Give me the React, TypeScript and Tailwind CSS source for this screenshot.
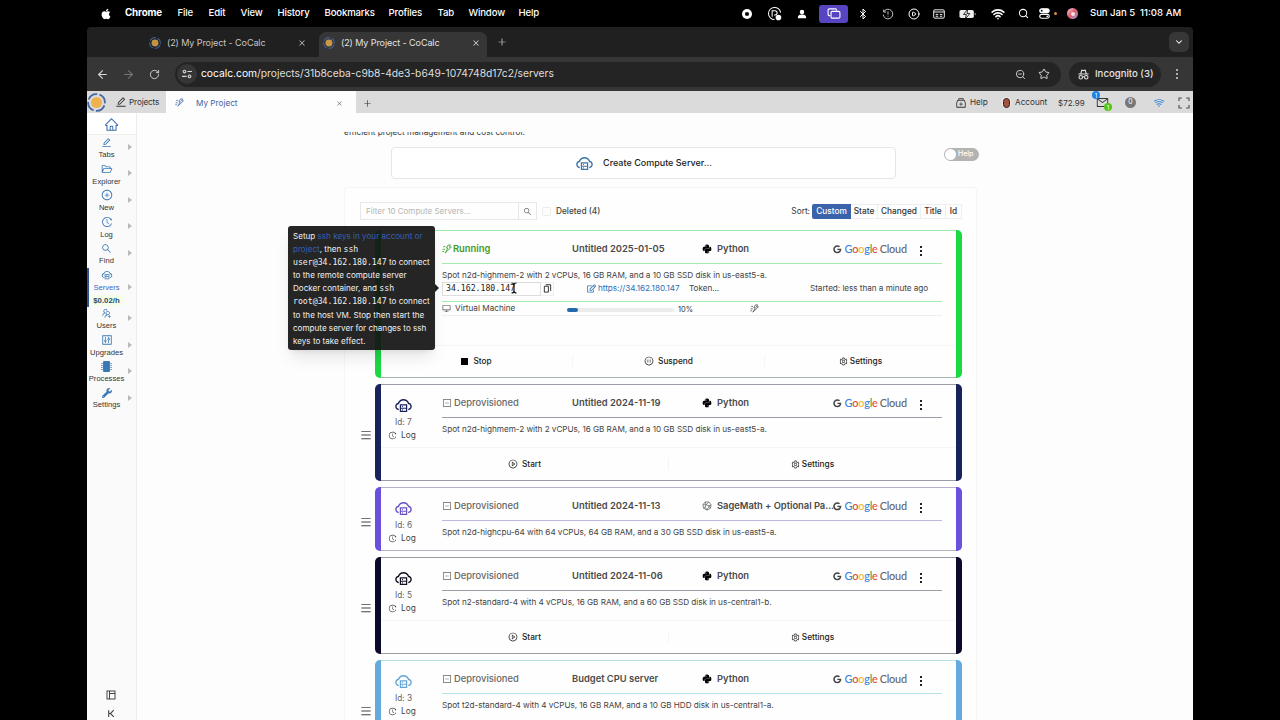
import type { ReactNode } from "react";
import {
  AiOutlineCloudServer,
  AiOutlineClose,
  AiOutlineControl,
  AiOutlineDesktop,
  AiOutlineEdit,
  AiOutlineFolderOpen,
  AiOutlineHistory,
  AiOutlineHome,
  AiOutlineMail,
  AiOutlineMedicineBox,
  AiOutlineMenu,
  AiOutlineMinusSquare,
  AiOutlinePauseCircle,
  AiOutlinePlayCircle,
  AiOutlinePlus,
  AiOutlinePlusCircle,
  AiOutlineSearch,
  AiOutlineSetting,
  AiOutlineUsergroupAdd,
  AiOutlineWifi,
} from "react-icons/ai";
import { FaApple, FaGoogle, FaMicrochip, FaPython, FaRegEdit, FaWrench } from "react-icons/fa";
import {
  ArrowLeft,
  ArrowRight,
  Bluetooth,
  ChevronDown,
  CirclePlay,
  RotateCw,
  Search,
  Star,
  Wifi,
  ZoomOut,
} from "lucide-react";
import { clsx } from "clsx";

function RunningIcon({ className }: { className?: string }) {
  return (
    <svg viewBox="0 0 16 16" className={className} fill="none" stroke="currentColor" strokeWidth="1.3">
      <path d="M10 1.5 7 6.500h2.600L5 14.500M15 5h-3.500L13.500 1.500H10M15 5 5 14.500" strokeLinejoin="round" />
      <path d="M2 4.200h3.500M1 8.500h4M.5 12h3" />
    </svg>
  );
}

function CocalcLogo({ className }: { className?: string }) {
  return (
    <svg viewBox="0 0 20 20" className={className} fill="none">
      <circle cx="10" cy="10" r="8.800" stroke="#4467a5" strokeWidth="1.900" strokeDasharray="11.300 2.500" transform="rotate(20 10 10)" />
      <circle cx="10" cy="10" r="5.800" fill="#efb14c" />
    </svg>
  );
}

/* ---------- macOS menu bar ---------- */

const MENU = [
  { label: "File", w: "w-[31px]" },
  { label: "Edit", w: "w-[32px]" },
  { label: "View", w: "w-[37px]" },
  { label: "History", w: "w-[47px]" },
  { label: "Bookmarks", w: "w-[64px]" },
  { label: "Profiles", w: "w-[49px]" },
  { label: "Tab", w: "w-[31px]" },
  { label: "Window", w: "w-[50px]" },
  { label: "Help", w: "w-[30px]" },
];

function MenuBar() {
  return (
    <div className="flex h-[27px] shrink-0 items-center bg-black pl-[100px] text-[9.6px] font-medium tracking-[-0.15px] text-white">
      <FaApple className="mr-[13px] size-[12px]" />
      <span className="w-[52.5px] text-[9.8px] font-bold">Chrome</span>
      {MENU.map((m) => (
        <span key={m.label} className={clsx(m.w, "whitespace-nowrap")}>
          {m.label}
        </span>
      ))}
      <div className="ml-auto flex items-center pr-[96px]">
        <svg viewBox="0 0 12 12" className="size-[10px]">
          <circle cx="6" cy="6" r="6" fill="white" />
          <rect x="3.8" y="3.8" width="4.4" height="4.4" rx="1" fill="black" />
        </svg>
        <svg viewBox="0 0 16 16" className="ml-[15px] size-[15px]" fill="none" stroke="white" strokeWidth="1.1">
          <path d="M14.500 7A6.500 6.500 0 1 0 8 14.500" />
          <path d="M5.500 11.500v-6.500h3a2.200 2.200 0 0 1 0 4.500H7.500" />
          <circle cx="12.200" cy="12.200" r="3" fill="white" stroke="none" />
        </svg>
        <svg viewBox="0 0 12 12" className="ml-[15.5px] size-[10px]" fill="white">
          <circle cx="6" cy="3.5" r="2.7" />
          <path d="M1 11c0-3.500 2-4.300 5-4.300s5 .8 5 4.300Z" />
        </svg>
        <span className="ml-[12px] flex h-[18px] w-[29px] items-center justify-center rounded-[3px] bg-[#5644c0]">
          <svg viewBox="0 0 16 13" className="h-[11px] w-[14px]" fill="none" stroke="white" strokeWidth="1.3">
            <path d="M3.500 9H2.500A1.500 1.500 0 0 1 1 7.500V2.500A1.500 1.500 0 0 1 2.500 1h7A1.500 1.500 0 0 1 11 2.500V3" />
            <rect x="4.5" y="4" width="10.5" height="8" rx="1.5" />
          </svg>
        </span>
        <Bluetooth className="ml-[9px] size-[12px]" strokeWidth={2} />
        <svg viewBox="0 0 14 14" className="ml-[13px] size-[12px]" fill="none" stroke="#ccc" strokeWidth="1.1">
          <path d="M2 4.500A5.600 5.600 0 1 1 1.400 7.600M2 1.800v2.900h2.900" />
          <path d="M7 4v3.600M7 9v1" />
        </svg>
        <CirclePlay className="ml-[14px] size-[12px]" />
        <svg viewBox="0 0 14 12" className="ml-[13px] h-[10px] w-[12px]" fill="none" stroke="white" strokeWidth="1.1">
          <rect x=".6" y="1" width="12.8" height="10" rx="1.5" />
          <path d="M.6 3.600h12.800M3 6.500h3M8 6.500h3M3 8.700h3M8 8.700h3" />
        </svg>
        <svg viewBox="0 0 20 11" className="ml-[14px] h-[10px] w-[18px]">
          <rect x=".5" y="1" width="16" height="9" rx="2" fill="#eee" />
          <path d="M17.500 4v3l1-.5v-2Z" fill="#aaa" />
          <path d="M9.800 0 5 6h3.200L7 11l5-6H8.800Z" fill="white" stroke="black" strokeWidth=".9" />
        </svg>
        <Wifi className="ml-[14px] size-[14px]" strokeWidth={2.8} />
        <Search className="ml-[13px] size-[11px]" strokeWidth={2.2} />
        <svg viewBox="0 0 12 12" className="ml-[10px] size-[11px]" fill="none" stroke="white" strokeWidth="1.2">
          <rect x=".8" y=".8" width="10.4" height="4.2" rx="2.1" fill="white" />
          <rect x=".8" y="7" width="10.4" height="4.2" rx="2.1" />
          <circle cx="3" cy="2.9" r="1" fill="black" stroke="none" />
          <circle cx="9" cy="9.1" r="1" fill="white" stroke="none" />
        </svg>
        <span className="ml-[4px] size-[3px] rounded-full bg-[#e08a3c]" />
        <span className="ml-[10px] flex size-[11px] items-center justify-center rounded-full bg-gradient-to-br from-[#f3c9e0] via-[#dd5a6b] to-[#7d9be8]">
          <span className="size-[4px] rounded-full bg-white/80" />
        </span>
        <span className="ml-[12px] w-[50px] whitespace-nowrap tracking-[-0.05px]">Sun Jan 5</span>
        <span className="w-[44px] whitespace-nowrap tracking-[0px]">11:08 AM</span>
      </div>
    </div>
  );
}

/* ---------- browser chrome ---------- */

function BrowserTab({ active }: { active?: boolean }) {
  return (
    <div
      className={clsx(
        "flex h-[25px] items-center pb-[3px] pl-[4px]",
        active ? "w-[168px] rounded-t-[7px] bg-[#363636] pr-[7px] text-[#e3e3e3]" : "w-[174px] pr-[13px] text-[#c7c7c7]",
      )}
    >
      <CocalcLogo className="size-[12px] opacity-80" />
      <span className="ml-[6px] whitespace-nowrap text-[9px] tracking-[-0.08px]">(2) My Project - CoCalc</span>
      <AiOutlineClose className="ml-auto size-[8px]" />
    </div>
  );
}

function BrowserChrome() {
  return (
    <div className="shrink-0">
      <div className="flex h-[30px] items-end rounded-t-[4px] bg-[#202020] pl-[58px] pr-[4px]">
        <BrowserTab />
        <BrowserTab active />
        <AiOutlinePlus className="mb-[10px] ml-[10px] size-[10px] text-[#d0d0d0]" />
        <span className="mb-[5px] ml-auto flex size-[20px] items-center justify-center rounded-[6px] bg-[#373737] text-white">
          <ChevronDown className="size-[10px]" strokeWidth={2.5} />
        </span>
      </div>
      <div className="flex h-[34px] items-center bg-[#363636] pl-[9px] text-[#d6d6d6]">
        <ArrowLeft className="size-[13px]" />
        <ArrowRight className="ml-[13px] size-[13px] text-[#757575]" />
        <RotateCw className="ml-[14px] size-[11px]" />
        <div className="ml-[15px] flex h-[25px] w-[886px] items-center rounded-full bg-[#242424]">
          <span className="ml-[2px] flex size-[20px] items-center justify-center rounded-full bg-[#363636]">
            <svg viewBox="0 0 12 12" className="size-[10px]" fill="none" stroke="currentColor" strokeWidth="1.3">
              <circle cx="3" cy="3" r="1.6" />
              <path d="M6.500 3H12M0 8.800h5.500" />
              <circle cx="9" cy="8.8" r="1.6" />
            </svg>
          </span>
          <span className="ml-[4px] whitespace-nowrap text-[10.3px] tracking-[-0.015px] text-[#dedede]">
            <span className="text-white">cocalc.com</span>/projects/31b8ceba-c9b8-4de3-b649-1074748d17c2/servers
          </span>
          <ZoomOut className="ml-auto size-[11px]" />
          <Star className="ml-[12px] mr-[11px] size-[12px]" />
        </div>
        <div className="ml-[8px] flex h-[25px] w-[92px] items-center rounded-full bg-[#242424] pl-[9px] text-[9.6px] font-medium text-[#e4e4e4]">
          <svg viewBox="0 0 14 14" className="size-[11px] shrink-0" fill="none" stroke="currentColor" strokeWidth="1.4">
            <path d="M3.600 6 4.800 1.500l2.200.6 2.200-.6L10.400 6M.5 6.300h13" />
            <circle cx="3.5" cy="10.5" r="2.2" />
            <circle cx="10.5" cy="10.5" r="2.2" />
            <path d="M5.700 10.200c.8-.5 1.800-.5 2.600 0" />
          </svg>
          <span className="ml-[6px] whitespace-nowrap">Incognito (3)</span>
        </div>
        <span className="ml-[15px] flex flex-col gap-[2px]">
          <i className="size-[2px] rounded-full bg-current" />
          <i className="size-[2px] rounded-full bg-current" />
          <i className="size-[2px] rounded-full bg-current" />
        </span>
      </div>
    </div>
  );
}

/* ---------- CoCalc top navigation ---------- */

function TopNav() {
  return (
    <div className="flex h-[22px] shrink-0 items-center bg-[#dbdbdb] text-[8.2px] text-[#333]">
      <CocalcLogo className="size-[19px]" />
      <AiOutlineEdit className="ml-[9px] size-[12px]" />
      <span className="ml-[2px] w-[37px] whitespace-nowrap pt-[1px] tracking-[-0.15px]">Projects</span>
      <div className="flex h-full w-[190px] items-center bg-[#fdfdfd] pl-[9px] text-[#3b64a5]">
        <RunningIcon className="size-[9px]" />
        <span className="ml-[12px] whitespace-nowrap pt-[2px]">My Project</span>
        <AiOutlineClose className="ml-auto mr-[13px] mt-[2px] size-[7px] text-[#777]" />
      </div>
      <AiOutlinePlus className="ml-[7px] mt-[2px] size-[9px]" />
      <div className="ml-auto flex items-center pr-[3px] pt-[1px]">
        <AiOutlineMedicineBox className="size-[12px]" />
        <span className="ml-[3px] w-[31px]">Help</span>
        <span className="flex size-[11px] items-center justify-center rounded-full bg-[#e9e3e0]">
          <span className="h-[10px] w-[7px] rounded-full border-[1.5px] border-[#321d1b] bg-[#a0543f]" />
        </span>
        <span className="ml-[3px] w-[43px]">Account</span>
        <span className="w-[36px] text-[8px]">$72.99</span>
        <span className="relative ml-[2px]">
          <AiOutlineMail className="size-[13px]" />
          <b className="absolute -left-[4px] -top-[5px] flex size-[8px] items-center justify-center rounded-full bg-[#1b83e8] text-[6px] font-normal text-white">
            1
          </b>
          <b className="absolute left-[8px] top-[7px] flex size-[8px] items-center justify-center rounded-full bg-[#52c41a] text-[6px] font-normal text-white">
            1
          </b>
        </span>
        <span className="ml-[16px] flex size-[11px] items-center justify-center rounded-full bg-[#777] text-[7px] text-white">0</span>
        <AiOutlineWifi className="ml-[17px] size-[12px] text-[#2f7fd6]" />
        <svg viewBox="0 0 12 12" className="ml-[13px] size-[12px]" fill="none" stroke="#555" strokeWidth="1.2">
          <path d="M1 4V1h3M8 1h3v3M11 8v3H8M4 11H1V8" />
        </svg>
      </div>
    </div>
  );
}

/* ---------- left flyout bar ---------- */

function SideItem({ icon, label, active }: { icon: ReactNode; label: string; active?: boolean }) {
  return (
    <div className={clsx("flex items-center", active ? "h-[39px] border-l-2 border-[#2f4f96]" : "h-[26.5px] pl-[2px]")}>
      <div className="flex w-[35px] flex-col items-center font-['Liberation_Sans',sans-serif] text-[#3a78b5]">
        {icon}
        <span className={clsx("mt-[2px] text-[7.6px] leading-[10px]", active ? "text-[#3a66c8]" : "text-[#333]")}>{label}</span>
        {active && (
          <span className="mt-[2px] w-[35px] rounded-[2px] bg-[#f3fde8] text-center text-[7.8px] font-bold leading-[11px] text-[#1f4c73]">
            $0.02/h
          </span>
        )}
      </div>
      <span className={clsx("ml-[4px] h-0 w-0 border-y-[3px] border-l-[4px] border-y-transparent border-l-[#b9b9b9]", !active && "mb-[3px]")} />
    </div>
  );
}

function Sidebar() {
  return (
    <div className="flex w-[50px] shrink-0 flex-col border-r border-[#ececec] bg-[#fafafa]">
      <div className="flex h-[21px] items-end justify-center bg-white pb-[2px]">
        <AiOutlineHome className="size-[15px] text-[#3a70a5]" />
      </div>
      <div className="border-t border-[#eee]">
        <SideItem icon={<AiOutlineEdit className="size-[11px]" />} label="Tabs" />
        <SideItem icon={<AiOutlineFolderOpen className="size-[12px]" />} label="Explorer" />
        <SideItem icon={<AiOutlinePlusCircle className="size-[12px]" />} label="New" />
        <SideItem icon={<AiOutlineHistory className="size-[12px]" />} label="Log" />
        <SideItem icon={<AiOutlineSearch className="size-[11px]" />} label="Find" />
        <SideItem icon={<AiOutlineCloudServer className="size-[12px]" />} label="Servers" active />
        <SideItem icon={<AiOutlineUsergroupAdd className="size-[11px]" />} label="Users" />
        <SideItem icon={<AiOutlineControl className="size-[12px]" />} label="Upgrades" />
        <SideItem icon={<FaMicrochip className="size-[11px]" />} label="Processes" />
        <SideItem icon={<FaWrench className="size-[10px]" />} label="Settings" />
      </div>
      <div className="mt-auto flex flex-col items-center gap-[9px] pb-[2px] pr-[1px] text-[#444]">
        <svg viewBox="0 0 10 10" className="size-[10px]" fill="none" stroke="currentColor">
          <rect x="1" y="1" width="8" height="8" />
          <path d="M3.500 1v8M3.500 3.500H9" />
        </svg>
        <svg viewBox="0 0 8 8" className="size-[9px]" fill="none" stroke="currentColor">
          <path d="M1.500 1v6M6 1 3 4l3 3M1.500 4H3" />
        </svg>
      </div>
    </div>
  );
}

/* ---------- compute servers ---------- */

function GoogleCloud() {
  return (
    <span className="flex w-[76px] shrink-0 items-center whitespace-nowrap">
      <FaGoogle className="mr-[3px] size-[8.5px] text-[#444]" />
      <span className="font-[Lato,sans-serif] text-[10.9px] font-medium tracking-[-0.2px]">
        <span className="text-[#3f7fe0]">G</span>
        <span className="text-[#df4a3c]">o</span>
        <span className="text-[#eebb35]">o</span>
        <span className="text-[#3f7fe0]">g</span>
        <span className="text-[#3da557]">l</span>
        <span className="text-[#df4a3c]">e</span>
        <span className="ml-[2px] text-[#666]">Cloud</span>
      </span>
    </span>
  );
}

function SageIcon() {
  return (
    <svg viewBox="0 0 16 16" className="size-[10px] shrink-0" fill="none" stroke="#666" strokeWidth="1.2">
      <path d="M5 1.500 11 1.500 14.500 6 13.500 11.500 8 14.500 2.500 11.500 1.500 6Z" />
      <path d="M5 1.500 6.500 6 1.500 6M6.500 6 11 1.500M6.500 6l5 1.500 3-1.500M11.500 7.500l2 4M11.500 7.500 8 14.500 5 10l1.500-4M5 10l-2.500 1.500" />
    </svg>
  );
}

interface Server {
  id: number;
  title: string;
  image: string;
  spec: string;
  bar: string;
  line: string;
  frame: string;
  cloud: string;
  footer: boolean;
}

const SERVERS: Server[] = [
  {
    id: 7,
    title: "Untitled 2024-11-19",
    image: "Python",
    spec: "Spot n2d-highmem-2 with 2 vCPUs, 16 GB RAM, and a 10 GB SSD disk in us-east5-a.",
    bar: "bg-[#18225b]",
    line: "border-[#9a9ca6]",
    frame: "border-[#9a9ca6]",
    cloud: "text-[#18225b]",
    footer: true,
  },
  {
    id: 6,
    title: "Untitled 2024-11-13",
    image: "SageMath + Optional Pa...",
    spec: "Spot n2d-highcpu-64 with 64 vCPUs, 64 GB RAM, and a 30 GB SSD disk in us-east5-a.",
    bar: "bg-[#6a50dc]",
    line: "border-[#bcb8dc]",
    frame: "border-[#b4b2c4]",
    cloud: "text-[#6a50c4]",
    footer: false,
  },
  {
    id: 5,
    title: "Untitled 2024-11-06",
    image: "Python",
    spec: "Spot n2-standard-4 with 4 vCPUs, 16 GB RAM, and a 60 GB SSD disk in us-central1-b.",
    bar: "bg-[#0b0a2b]",
    line: "border-[#9c9ca4]",
    frame: "border-[#9c9ca4]",
    cloud: "text-[#111122]",
    footer: true,
  },
  {
    id: 3,
    title: "Budget CPU server",
    image: "Python",
    spec: "Spot t2d-standard-4 with 4 vCPUs, 16 GB RAM, and a 10 GB HDD disk in us-central1-a.",
    bar: "bg-[#65aadd]",
    line: "border-[#b5e2e4]",
    frame: "border-[#b8dfe4]",
    cloud: "text-[#65a5d5]",
    footer: true,
  },
];

interface CardFrameProps {
  bar: string;
  frame: string;
  height: string;
  handle?: boolean;
  children: ReactNode;
}

function CardFrame({ bar, frame, height, handle, children }: CardFrameProps) {
  return (
    <div className={clsx("flex shrink-0 items-center", height)}>
      <div className="w-[15px] pt-[5px]">{handle && <AiOutlineMenu className="size-[12px] text-[#444]" />}</div>
      <div className="flex h-full w-[587px] overflow-hidden rounded-[5px]">
        <div className={clsx("w-[6px]", bar)} />
        <div className={clsx("flex-1 border-y bg-[#fefefe]", frame)}>{children}</div>
        <div className={clsx("w-[6px]", bar)} />
      </div>
    </div>
  );
}

function HeaderRow({ state, title, image, line }: { state: ReactNode; title: string; image: string; line: string }) {
  return (
    <div className={clsx("flex h-[33px] w-[500px] items-center border-b pt-[5px] text-[9.4px] font-semibold text-[#4a4a4a]", line)}>
      <span className="flex w-[130px] items-center gap-[2px]">{state}</span>
      <span className="w-[130px] whitespace-nowrap">{title}</span>
      <span className="flex w-[131px] items-center gap-[5px] whitespace-nowrap tracking-[-0.03px]">
        {image === "Python" ? <FaPython className="size-[10px] text-black" /> : <SageIcon />}
        {image}
      </span>
      <GoogleCloud />
      <span className="ml-[11px] flex flex-col gap-[2.5px] pt-[3px]">
        <i className="size-[1.5px] bg-[#222]" />
        <i className="size-[1.5px] bg-[#222]" />
        <i className="size-[1.5px] bg-[#222]" />
      </span>
    </div>
  );
}

function Action({ icon, label }: { icon: ReactNode; label: string }) {
  return (
    <div className="flex flex-1 items-center justify-center gap-[4px] border-r border-[#f5f5f5]">
      {icon}
      {label}
    </div>
  );
}

function SettingsAction() {
  return (
    <div className="flex flex-1 items-center justify-center gap-[2px]">
      <AiOutlineSetting className="size-[9px]" /> Settings
    </div>
  );
}

function ServerCard({ server }: { server: Server }) {
  return (
    <CardFrame bar={server.bar} frame={server.frame} height={server.footer ? "h-[97px]" : "h-[64px]"} handle>
      <div className="flex h-[62px] pl-[7px]">
        <div className="flex w-[54px] flex-col text-[8.3px] text-[#666]">
          <AiOutlineCloudServer className={clsx("ml-[6px] mt-[11px] size-[19px]", server.cloud)} />
          <span className="mt-[1px] pl-[7px] leading-[12px]">Id: {server.id}</span>
          <span className="mt-[1px] flex items-center gap-[4px] leading-[13px] text-[#444]">
            <AiOutlineHistory className="size-[9px]" /> Log
          </span>
        </div>
        <div>
          <HeaderRow
            state={
              <>
                <AiOutlineMinusSquare className="size-[10px] text-[#666]" />
                <span className="font-medium text-[#666]">Deprovisioned</span>
              </>
            }
            title={server.title}
            image={server.image}
            line={server.line}
          />
          <div className="pt-[5px] text-[8.2px] leading-[13px] tracking-[-0.05px] text-[#444]">{server.spec}</div>
        </div>
      </div>
      {server.footer && (
        <div className="flex h-[33px] items-center border-t border-[#f6f6f6] text-[8.3px] font-medium text-[#222]">
          <Action icon={<AiOutlinePlayCircle className="size-[10px]" />} label="Start" />
          <SettingsAction />
        </div>
      )}
    </CardFrame>
  );
}

function RunningCard() {
  return (
    <CardFrame bar="bg-[#1bd943]" frame="border-t-[#9be8a8] border-b-[#a9b5aa]" height="h-[148px]">
      <div className="flex h-[114px] pl-[61px]">
        <div>
          <HeaderRow
            state={
              <span className="flex items-center gap-[1px] text-[#3c9a22]">
                <RunningIcon className="size-[10px]" /> Running
              </span>
            }
            title="Untitled 2025-01-05"
            image="Python"
            line="border-[#a5ecb0]"
          />
          <div className="h-[38px] w-[500px] border-b border-[#a5ecb0] pt-[5px] text-[8.2px] leading-[13px] tracking-[-0.05px] text-[#444]">
            <div>Spot n2d-highmem-2 with 2 vCPUs, 16 GB RAM, and a 10 GB SSD disk in us-east5-a.</div>
            <div className="flex h-[13px] items-center">
              <span className="relative flex h-[14px] w-[99px] items-center border border-[#ddd] pl-[3px] font-['DejaVu_Sans_Mono',monospace] text-[8.2px] tracking-[0px] text-[#222]">
                34.162.180.147
                <svg viewBox="0 0 8 12" className="absolute left-[67px] top-[-1px] h-[12px] w-[8px]" fill="none" stroke="#111">
                  <path d="M1.500 1C3 1 4 1.500 4 3v6c0 1.500-1 2-2.500 2M6.500 1C5 1 4 1.500 4 3v6c0 1.500 1 2 2.500 2" strokeWidth="1.2" />
                </svg>
              </span>
              <span className="flex h-[14px] w-[13px] items-center justify-center border border-l-0 border-[#eee]">
                <svg viewBox="0 0 10 10" className="size-[9px]" fill="none" stroke="#222">
                  <path d="M1.500 2.500h4.500v6.500H1.500ZM3 .8h5.500v7" />
                </svg>
              </span>
              <FaRegEdit className="ml-[33px] size-[9px] text-[#2c70b8]" />
              <span className="ml-[2px] w-[91px] whitespace-nowrap text-[#2c70b8]">https://34.162.180.147</span>
              <span className="w-[121px]">Token...</span>
              <span className="whitespace-nowrap">Started: less than a minute ago</span>
            </div>
          </div>
          <div className="flex h-[14px] w-[500px] items-center border-b border-[#eee] text-[8.2px] text-[#444]">
            <AiOutlineDesktop className="size-[9px]" />
            <span className="ml-[4px] w-[112px]">Virtual Machine</span>
            <span className="mt-[2px] h-[4px] w-[107px] rounded-full bg-[#ececec]">
              <span className="block h-full w-[11px] rounded-full bg-[#2468b0]" />
            </span>
            <span className="ml-[4px] w-[72px] pt-[2px] text-[7.4px] text-[#333]">10%</span>
            <RunningIcon className="size-[9px]" />
          </div>
        </div>
      </div>
      <div className="flex h-[31px] items-center border-t border-[#f6f6f6] text-[8.3px] font-medium text-[#222]">
        <Action icon={<span className="mr-[1px] size-[7px] bg-black" />} label="Stop" />
        <Action icon={<AiOutlinePauseCircle className="size-[10px]" />} label="Suspend" />
        <SettingsAction />
      </div>
    </CardFrame>
  );
}

const SORTS = [
  { label: "State", w: "w-[27px]" },
  { label: "Changed", w: "w-[43px]" },
  { label: "Title", w: "w-[25px]" },
  { label: "Id", w: "w-[16px]" },
];

function Filters() {
  return (
    <div className="flex h-[18px] items-center text-[8.3px] text-[#333]">
      <div className="flex h-[18px] w-[177px] items-center border border-[#e8e8e8]">
        <span className="w-[157px] pl-[5px] text-[8px] text-[#b5b5b5]">Filter 10 Compute Servers...</span>
        <span className="flex h-full flex-1 items-center justify-center border-l border-[#e8e8e8]">
          <AiOutlineSearch className="size-[9px] text-[#666]" />
        </span>
      </div>
      <span className="ml-[5px] size-[9px] rounded-[2px] border border-[#ececec]" />
      <span className="ml-[5px] font-medium text-[#444]">Deleted (4)</span>
      <div className="ml-auto flex h-[15px] items-center font-medium">
        <span className="mr-[2px] font-normal">Sort:</span>
        <span className="flex h-full w-[39px] items-center justify-center rounded-l-[2px] bg-[#3a63ab] text-white">Custom</span>
        {SORTS.map((s) => (
          <span key={s.label} className={clsx("flex h-full items-center justify-center border-y border-r border-[#eee]", s.w)}>
            {s.label}
          </span>
        ))}
      </div>
    </div>
  );
}

function Code({ children }: { children: ReactNode }) {
  return <span className="font-['DejaVu_Sans_Mono',monospace] text-[8.2px] leading-none">{children}</span>;
}

function SshTooltip() {
  return (
    <div className="absolute left-[288px] top-[226px] h-[124px] w-[147px] rounded-[3px] bg-[#141414]/93 px-[5px] pt-[4px] text-[8.1px] leading-[13.1px] text-[#f0f0f0] shadow-lg">
      <div className="whitespace-nowrap">
        Setup <span className="text-[#3360b4]">ssh keys in your account or</span>
        <br />
        <span className="text-[#3360b4]">project</span>, then <Code>ssh</Code>
        <br />
        <Code>user@34.162.180.147</Code> to connect
        <br />
        to the remote compute server
        <br />
        Docker container, and <Code>ssh</Code>
        <br />
        <Code>root@34.162.180.147</Code> to connect
        <br />
        to the host VM. Stop then start the
        <br />
        compute server for changes to ssh
        <br />
        keys to take effect.
      </div>
      <span className="absolute left-full top-[58px] border-y-[4px] border-l-[4px] border-y-transparent border-l-[#1c1e1c]" />
    </div>
  );
}

function ComputeServers() {
  return (
    <div className="flex min-w-0 flex-1 flex-col overflow-hidden bg-[#fdfdfd] pl-[207px]">
      {/* last line of the intro text, scrolled mostly out of view */}
      <div className="mt-[19px] flex h-[6px] shrink-0 items-end overflow-hidden text-[8.2px] leading-[12px] text-[#333]">
        <span>efficient project management and cost control.</span>
      </div>
      <div className="mt-[9px] flex shrink-0 items-start">
        <button className="ml-[47px] flex h-[32px] w-[505px] items-center justify-center gap-[9px] rounded-[4px] border border-[#e6e6e6] bg-white text-[9px] font-medium text-[#222]">
          <AiOutlineCloudServer className="size-[19px] text-[#3a74a8]" />
          Create Compute Server...
        </button>
        <span className="ml-[48px] mt-[1px] flex h-[13px] w-[35px] items-center rounded-full bg-[#b3b3b3] px-[1px] text-[7px] font-medium text-white">
          <i className="mr-[2px] size-[11px] rounded-full bg-white" />
          Help
        </span>
      </div>
      <div className="mt-[8px] h-[700px] w-[633px] shrink-0 rounded-t-[4px] border border-b-0 border-[#f5f5f5] bg-[#fefefe] pl-[15px] pr-[14px] pt-[14px]">
        <Filters />
        <div className="mt-[10px] flex flex-col gap-[6px]">
          <RunningCard />
          {SERVERS.map((s) => (
            <ServerCard key={s.id} server={s} />
          ))}
        </div>
      </div>
    </div>
  );
}

export default function App() {
  return (
    <div className="relative flex h-[720px] w-[1280px] flex-col overflow-hidden bg-black font-[Inter,'Liberation_Sans',sans-serif]">
      <MenuBar />
      <div className="mx-[87px] flex min-h-0 flex-1 flex-col">
        <BrowserChrome />
        <TopNav />
        <div className="flex min-h-0 flex-1 bg-white">
          <Sidebar />
          <ComputeServers />
        </div>
      </div>
      <SshTooltip />
    </div>
  );
}
